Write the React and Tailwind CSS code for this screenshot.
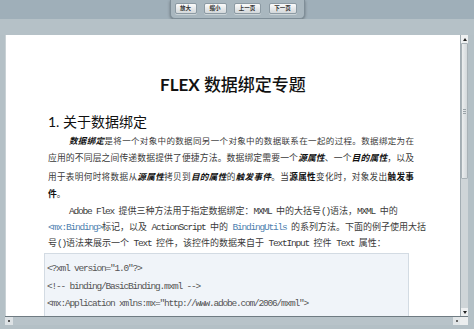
const CJK = "font-['Noto_Sans_CJK_SC',sans-serif]";

function L({ children, className = "" }) {
  return (
    <span className={"font-['Liberation_Mono',monospace] text-[9.5px] tracking-[-1.2px] whitespace-pre " + className}>
      {children}
    </span>
  );
}

function BI({ children }) {
  return <span className="font-bold italic text-[#111]">{children}</span>;
}
function B({ children }) {
  return <span className="font-bold text-[#111]">{children}</span>;
}

function Btn({ children, w }) {
  return (
    <div
      className={
        "h-[11px] rounded-[2px] border border-[#8c9aa3] bg-gradient-to-b from-[#fbfbfb] to-[#d3d8db] flex items-center justify-center text-[5.5px] font-bold text-[#333] leading-none shadow-[0_1px_0_rgba(255,255,255,0.4)] " +
        CJK + " " + w
      }
    >
      {children}
    </div>
  );
}

export default function App() {
  return (
    <div className="w-[474px] h-[329px] overflow-hidden flex flex-col bg-[#b4c0c6]">
      {/* toolbar */}
      <div className="h-[19px] shrink-0 bg-[#9fafb9] flex justify-center">
        <div className="w-[135px] h-[19px] bg-[#a9b7bf] border border-t-0 border-[#7f8e98] rounded-b-[5px] shadow-[0_1px_3px_rgba(0,0,0,0.35)] flex items-start pt-[3px] pl-[4px] gap-[4px]">
          <Btn w="w-[22px]">放大</Btn>
          <Btn w="w-[23px] ml-[3px]">缩小</Btn>
          <Btn w="w-[27px] ml-[3px]">上一页</Btn>
          <Btn w="w-[28px] ml-[4px]">下一页</Btn>
        </div>
      </div>
      {/* band */}
      <div className="h-[16px] shrink-0 bg-[#b5c1c7]" />
      {/* main */}
      <div className="h-[281px] shrink-0 flex pl-[5px]">
        <div className={"w-[455px] h-[281px] bg-white overflow-hidden border-l border-[#c9d1d5] " + CJK}>
          <div className="pt-[37px]">
            <div className="h-[24px] leading-[24px] text-center text-[17px] text-[#111] whitespace-nowrap">
              <span className="font-['Lato',sans-serif] font-bold">FLEX </span>
              <span className="font-medium">数据绑定专题</span>
            </div>
            <div className="mt-[15px] ml-[42px] h-[20px] leading-[20px] text-[14px] text-[#111] whitespace-nowrap">
              <span className="font-['Lato',sans-serif]">1. </span>关于数据绑定
            </div>
            <div className="ml-[42px] w-[366px] text-[8.8px] text-[#3a3a3a]">
              <div className="h-[18px] leading-[18px] pl-[21px] text-justify [text-align-last:justify] overflow-hidden text-[8.5px]">
                <BI>数据绑定</BI>是将一个对象中的数据同另一个对象中的数据联系在一起的过程。数据绑定为在
              </div>
              <div className="h-[18px] leading-[18px] text-justify [text-align-last:justify] overflow-hidden">
                应用的不同层之间传递数据提供了便捷方法。数据绑定需要一个<BI>源属性</BI>、一个<BI>目的属性</BI>，以及
              </div>
              <div className="h-[18px] leading-[18px] text-justify [text-align-last:justify] overflow-hidden text-[8.6px]">
                用于表明何时将数据从<BI>源属性</BI>拷贝到<BI>目的属性</BI>的<BI>触发事件</BI>。当<B>源属性</B>变化时，对象发出<B>触发事</B>
              </div>
              <div className="h-[18px] leading-[18px]">
                <B>件</B>。
              </div>
              <div className="h-[16px] leading-[16px] pl-[21px] whitespace-nowrap text-[9px]">
                <L>Adobe Flex </L>提供三种方法用于指定数据绑定：<L>MXML </L>中的大括号<L>({})</L>语法，<L>MXML </L>中的
              </div>
              <div className="h-[16px] leading-[16px] whitespace-nowrap text-[9px]">
                <L className="text-[#4f7fb0]">&lt;mx:Binding&gt;</L>标记，以及<L> ActionScript </L>中的<L> </L>
                <L className="text-[#4f7fb0]">BindingUtils</L>
                <L> </L>的系列方法。下面的例子使用大括
              </div>
              <div className="h-[16px] leading-[16px] whitespace-nowrap text-[9px]">
                号<L>({})</L>语法来展示一个<L> Text </L>控件，该控件的数据来自于<L> TextInput </L>控件<L> Text </L>属性：
              </div>
            </div>
            <div className="mt-[2px] ml-[38px] w-[365px] h-[90px] bg-[#f0f4f9] border border-[#d3dbe3] pt-[2px] pl-[2px] text-[#555]">
              <div className="h-[17.5px] leading-[17.5px]"><L>&lt;?xml version="1.0"?&gt;</L></div>
              <div className="h-[17.5px] leading-[17.5px]"><L>&lt;!-- binding/BasicBinding.mxml --&gt;</L></div>
              <div className="h-[17.5px] leading-[17.5px]"><L>&lt;mx:Application xmlns:mx="http://www.adobe.com/2006/mxml"&gt;</L></div>
              <div className="h-[17.5px] leading-[17.5px]"><L>    &lt;mx:TextInput id="myTI" text="Enter text here"/&gt;</L></div>
            </div>
          </div>
        </div>
        {/* vertical scrollbar */}
        <div className="w-[8px] h-[281px] bg-[#d9dde0] border-l border-[#a3adb3] flex flex-col">
          <div className="h-[8px] flex items-center justify-center bg-[#eef0f1]">
            <div className="w-0 h-0 border-l-[2px] border-r-[2px] border-b-[3px] border-l-transparent border-r-transparent border-b-[#222]" />
          </div>
          <div className="h-[136px] bg-gradient-to-r from-[#eceeef] to-[#d4d9dc] border border-[#a9b2b7] rounded-[1px] flex flex-col items-center justify-center gap-[1px]">
            <div className="w-[3px] h-px bg-[#9aa3a8]" />
            <div className="w-[3px] h-px bg-[#9aa3a8]" />
            <div className="w-[3px] h-px bg-[#9aa3a8]" />
          </div>
          <div className="flex-1 bg-[#cfd5d8]" />
          <div className="h-[8px] flex items-center justify-center bg-[#eef0f1]">
            <div className="w-0 h-0 border-l-[2px] border-r-[2px] border-t-[3px] border-l-transparent border-r-transparent border-t-[#222]" />
          </div>
        </div>
      </div>
      {/* horizontal scrollbar */}
      <div className="h-[9px] shrink-0 ml-[5px] w-[463px] flex border-t border-[#6f7b82]">
        <div className="w-[8px] bg-[#dde2e5] flex items-center justify-center">
          <div className="w-[2px] h-[2px] bg-[#555]" />
        </div>
        <div className="flex-1 bg-[#b8c3c9]" />
        <div className="w-[7px] bg-[#e2e6e8] flex items-center justify-center">
          <div className="w-[2px] h-[2px] bg-[#666]" />
        </div>
        <div className="w-[8px] bg-[#eceeef]" />
      </div>
      <div className="flex-1 bg-[#b4c0c6]" />
    </div>
  );
}
